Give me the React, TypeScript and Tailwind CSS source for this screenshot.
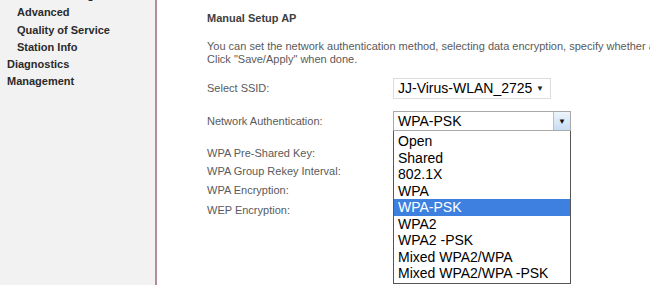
import React from 'react';

const sideItems = [
  { label: 'Wireless Bridge', sub: true },
  { label: 'Advanced', sub: true },
  { label: 'Quality of Service', sub: true },
  { label: 'Station Info', sub: true },
  { label: 'Diagnostics', sub: false },
  { label: 'Management', sub: false },
];

const authOptions = [
  'Open',
  'Shared',
  '802.1X',
  'WPA',
  'WPA-PSK',
  'WPA2',
  'WPA2 -PSK',
  'Mixed WPA2/WPA',
  'Mixed WPA2/WPA -PSK',
];

const lowerLabels = [
  { label: 'WPA Pre-Shared Key:', mt: 'mt-[16px]' },
  { label: 'WPA Group Rekey Interval:', mt: 'mt-[5px]' },
  { label: 'WPA Encryption:', mt: 'mt-[6px]' },
  { label: 'WEP Encryption:', mt: 'mt-[7px]' },
];

export default function App() {
  const selected = 'WPA-PSK';

  return (
    <div className="flex h-[285px] w-[650px] overflow-hidden bg-white font-['Liberation_Sans',Arial,sans-serif]">
      {/* Left menu */}
      <aside className="w-[157px] shrink-0 border-r-2 border-[#b48c98] bg-[#f2f2f2]">
        <ul className="-mt-[13px] text-[11px] font-bold leading-[17.3px] text-[#2a2a2a]">
          {sideItems.map((item) => (
            <li key={item.label} className={item.sub ? 'pl-[17px]' : 'pl-[7px]'}>
              {item.label}
            </li>
          ))}
        </ul>
      </aside>

      {/* Main content */}
      <main className="relative flex-1 pl-[50px] pt-[12px] text-[11px] leading-[13px] text-[#5a5a5a]">
        <h1 className="font-bold text-[#404040]">Manual Setup AP</h1>
        <p className="mt-[15px] whitespace-nowrap">
          You can set the network authentication method, selecting data encryption, specify whether a network key is required to authenticate to this wireless network and specify the encryption strength.
          <br />
          Click &quot;Save/Apply&quot; when done.
        </p>

        <div className="mt-[12px] flex items-center">
          <span className="w-[186px]">Select SSID:</span>
          <div className="flex h-[21px] w-[158px] items-center justify-between border border-[#dcdcdc] pl-[4px] pr-[6px] text-[14px] text-black">
            <span>JJ-Virus-WLAN_2725</span>
            <span className="text-[8px] text-[#222]">▼</span>
          </div>
        </div>

        <div className="relative mt-[12px] flex items-center">
          <span className="w-[186px]">Network Authentication:</span>
          <div className="relative">
            <div className="flex h-[20px] w-[178px] items-center border border-[#a9a9a9] text-[14px] text-black">
              <span className="flex-1 pl-[4px]">{selected}</span>
              <span className="flex h-full w-[17px] items-center justify-center border-l border-[#a9c4e0] bg-gradient-to-b from-[#eef5fc] to-[#c7ddf2] text-[8px] text-[#111]">
                ▼
              </span>
            </div>
            {/* Open dropdown list */}
            <ul className="absolute left-0 top-[20px] z-10 w-[178px] border border-t-0 border-[#555] bg-white pt-[2px] pb-[1px] text-[14px] leading-[16.5px] text-black">
              {authOptions.map((opt) => (
                <li
                  key={opt}
                  className={
                    opt === selected
                      ? 'bg-[#3d80df] pl-[4px] text-white'
                      : 'pl-[4px]'
                  }
                >
                  {opt}
                </li>
              ))}
            </ul>
          </div>
        </div>

        {lowerLabels.map((row) => (
          <div key={row.label} className={row.mt}>
            {row.label}
          </div>
        ))}
      </main>
    </div>
  );
}
